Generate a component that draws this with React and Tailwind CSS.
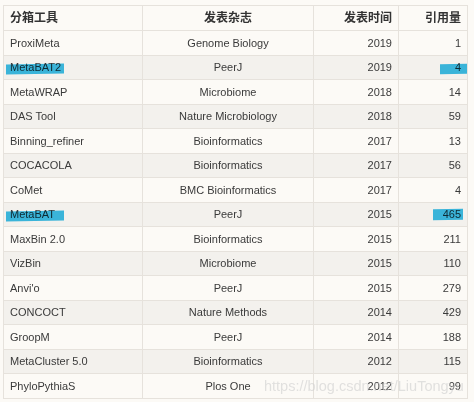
import React from 'react';

const rows = [
  ['ProxiMeta', 'Genome Biology', '2019', '1'],
  ['MetaBAT2', 'PeerJ', '2019', '4', true],
  ['MetaWRAP', 'Microbiome', '2018', '14'],
  ['DAS Tool', 'Nature Microbiology', '2018', '59'],
  ['Binning_refiner', 'Bioinformatics', '2017', '13'],
  ['COCACOLA', 'Bioinformatics', '2017', '56'],
  ['CoMet', 'BMC Bioinformatics', '2017', '4'],
  ['MetaBAT', 'PeerJ', '2015', '465', true],
  ['MaxBin 2.0', 'Bioinformatics', '2015', '211'],
  ['VizBin', 'Microbiome', '2015', '110'],
  ["Anvi'o", 'PeerJ', '2015', '279'],
  ['CONCOCT', 'Nature Methods', '2014', '429'],
  ['GroopM', 'PeerJ', '2014', '188'],
  ['MetaCluster 5.0', 'Bioinformatics', '2012', '115'],
  ['PhyloPythiaS', 'Plos One', '2012', '99'],
];

function Mark({ className }) {
  return (
    <span
      className={`absolute bg-[#3dbfea] mix-blend-multiply -skew-y-1 ${className}`}
    />
  );
}

export default function App() {
  return (
    <div
      className="relative w-[474px] h-[402px] overflow-hidden bg-[#fcfaf6] pl-[3px] pt-[5px] text-[11px] text-[#3a3a3a]"
      style={{ fontFamily: '"Liberation Sans", Arial, "Noto Sans CJK SC", sans-serif' }}
    >
      <table className="w-[464px] table-fixed border-collapse">
        <colgroup>
          <col className="w-[139px]" />
          <col className="w-[171px]" />
          <col className="w-[85px]" />
          <col className="w-[69px]" />
        </colgroup>
        <thead>
          <tr className="h-[25px] bg-[#fcfaf6] font-bold text-[12px] text-[#333]">
            <th className="border border-[#e6e2dc] px-[6px] text-left font-bold">分箱工具</th>
            <th className="border border-[#e6e2dc] px-[6px] text-center font-bold">发表杂志</th>
            <th className="border border-[#e6e2dc] px-[6px] text-right font-bold">发表时间</th>
            <th className="border border-[#e6e2dc] px-[6px] text-right font-bold">引用量</th>
          </tr>
        </thead>
        <tbody>
          {rows.map(([tool, journal, year, cites, hl], i) => (
            <tr
              key={tool}
              className={`h-[24.5px] ${i % 2 === 1 ? 'bg-[#f3f1ed]' : 'bg-[#fcfaf6]'}`}
            >
              <td className="relative border border-[#e6e2dc] px-[6px] text-left">
                {tool}
                {hl && <Mark className="left-[2px] w-[58px] top-[8px] h-[10px]" />}
              </td>
              <td className="border border-[#e6e2dc] px-[6px] text-center">{journal}</td>
              <td className="border border-[#e6e2dc] px-[6px] text-right">{year}</td>
              <td className="relative border border-[#e6e2dc] px-[6px] text-right">
                {cites}
                {hl && (
                  <Mark
                    className={
                      cites === '4'
                        ? 'right-0 w-[27px] top-[8px] h-[10px]'
                        : 'right-[4px] w-[30px] top-[6px] h-[11px]'
                    }
                  />
                )}
              </td>
            </tr>
          ))}
        </tbody>
      </table>

      {/* csdn watermark */}
      <div className="pointer-events-none absolute left-[264px] top-[376px] text-[14.5px] text-[#cfcfcf] opacity-60 whitespace-nowrap">
        https://blog.csdn.net/LiuTongyu
      </div>
    </div>
  );
}
